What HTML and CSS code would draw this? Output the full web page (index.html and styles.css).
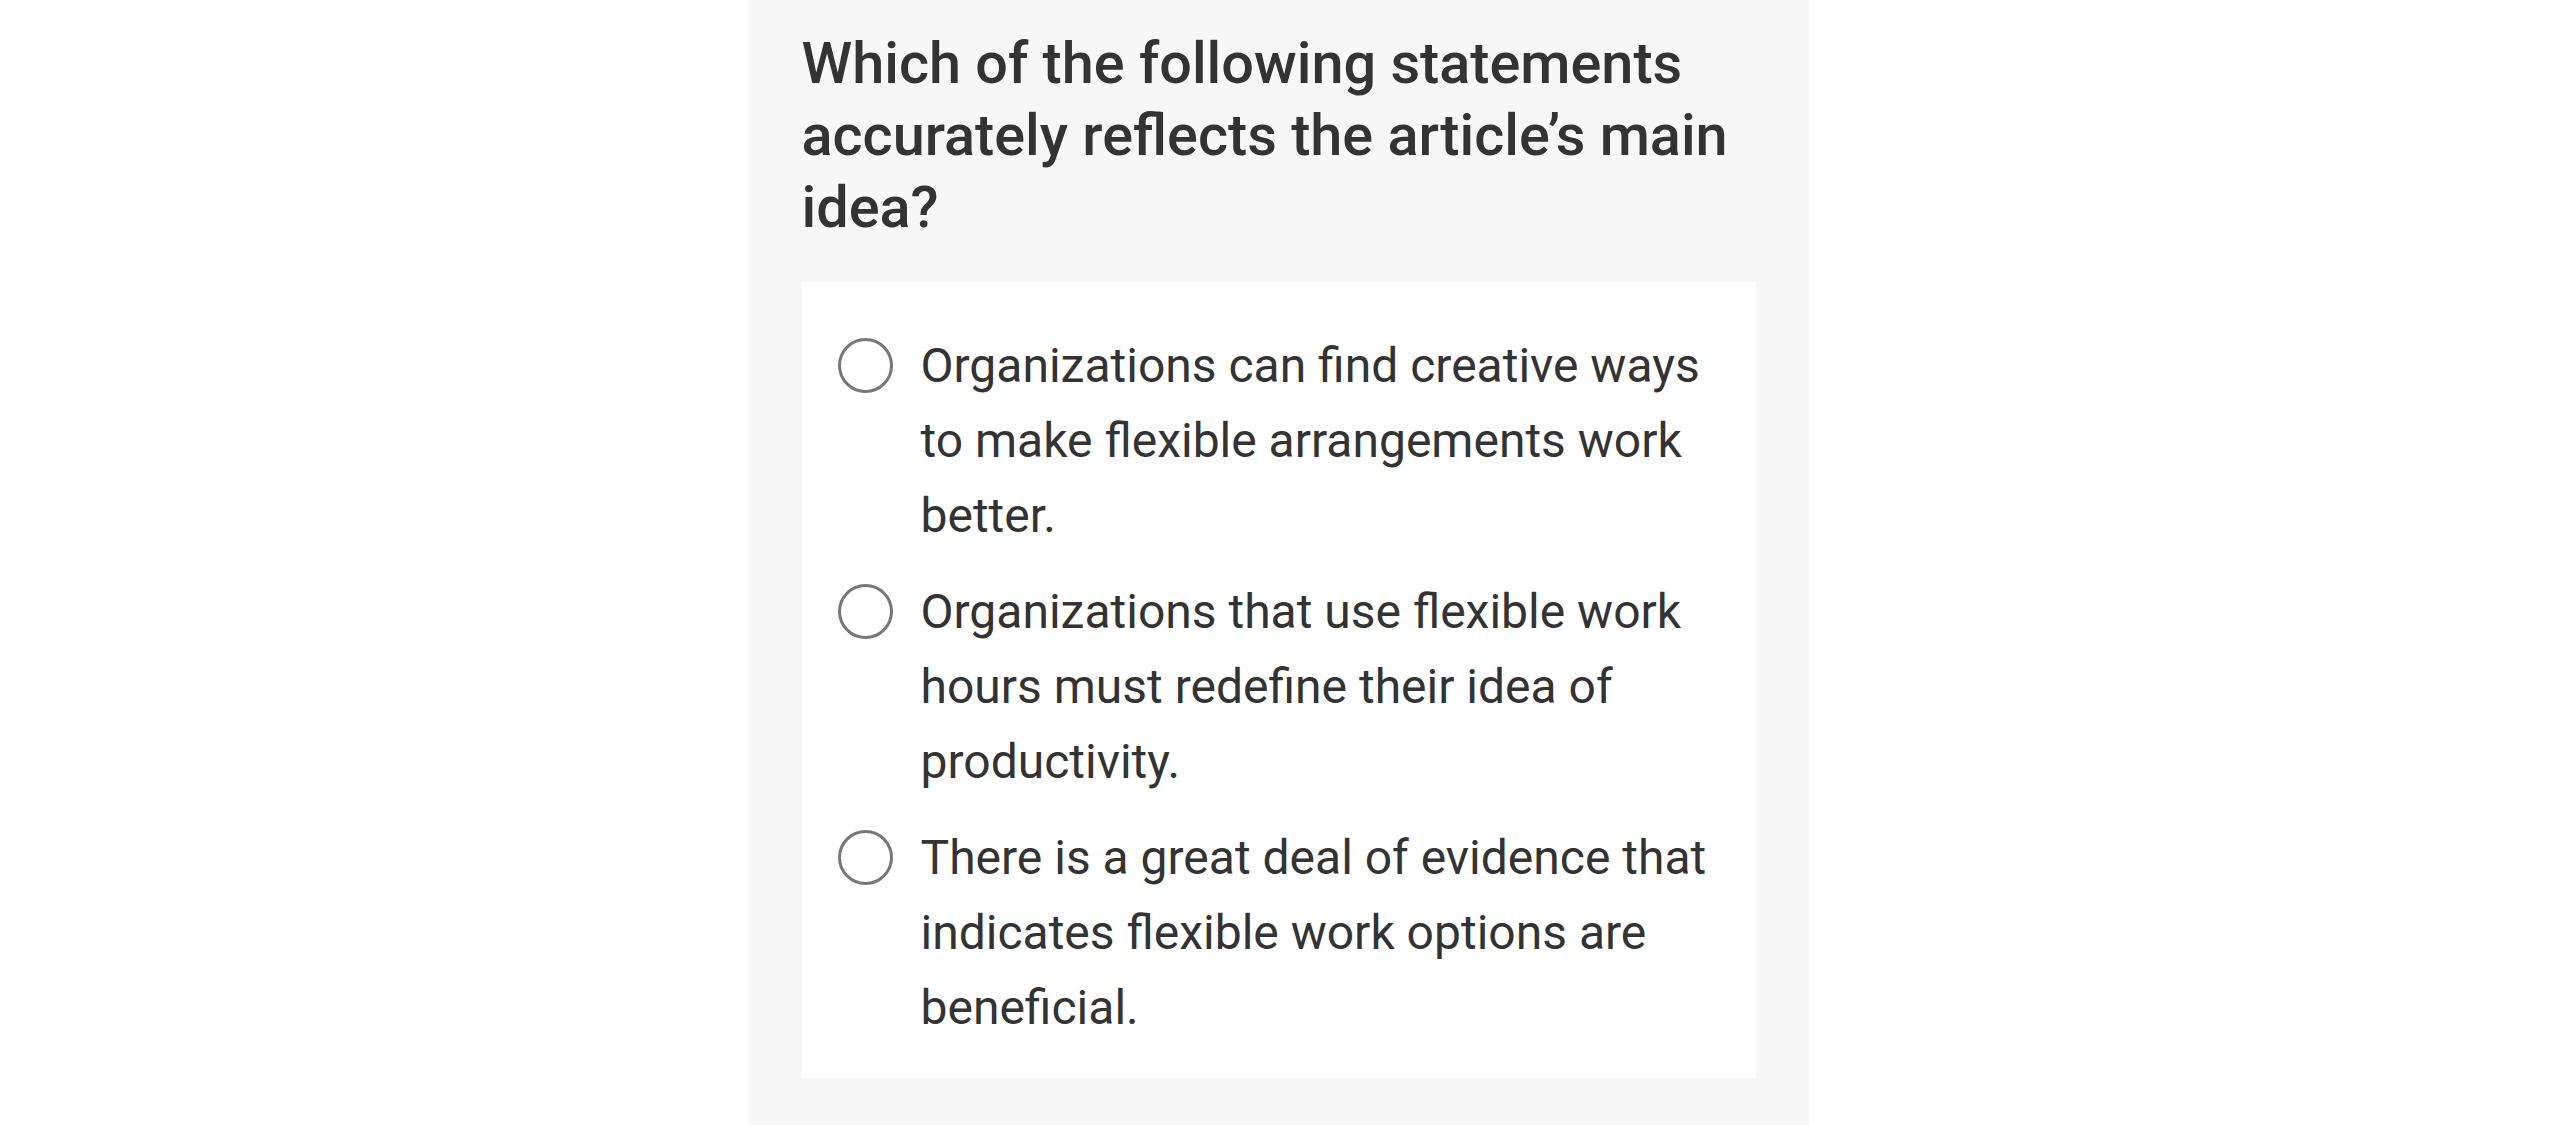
FILE: index.html
```html
<!DOCTYPE html>
<html lang="en">
<head>
<meta charset="utf-8">
<title>Question</title>
<link rel="stylesheet" href="styles.css">
</head>
<body>
<main class="panel">
  <h1 class="question">Which of the following statements accurately reflects the article’s main idea?</h1>
  <div class="card">
    <label class="option">
      <span class="radio"></span>
      <span class="text">Organizations can find creative ways to make flexible arrangements work better.</span>
    </label>
    <label class="option">
      <span class="radio"></span>
      <span class="text">Organizations that use flexible work hours must redefine their idea of productivity.</span>
    </label>
    <label class="option">
      <span class="radio"></span>
      <span class="text">There is a great deal of evidence that indicates flexible work options are beneficial.</span>
    </label>
  </div>
</main>
</body>
</html>
```
FILE: styles.css
```css
html, body {
  margin: 0;
  padding: 0;
  background: #ffffff;
}
body {
  font-family: Roboto, "Liberation Sans", Arial, sans-serif;
  color: #333333;
}
.panel {
  box-sizing: border-box;
  width: 1061px;
  min-height: 1125px;
  margin: 0 auto;
  padding: 28px 53px 0 54px;
  background: #f7f7f7;
}
.question {
  margin: 0 0 38px 0;
  font-size: 57.6px;
  line-height: 72px;
  font-weight: 500;
  color: #333333;
}
.card {
  background: #ffffff;
  padding: 46px 36px 33px 36px;
  display: flex;
  flex-direction: column;
  gap: 21px;
}
.option {
  display: flex;
  align-items: flex-start;
  gap: 28px;
  cursor: pointer;
}
.radio {
  flex: 0 0 auto;
  box-sizing: border-box;
  width: 55px;
  height: 55px;
  margin-top: 10px;
  border: 3px solid #777777;
  border-radius: 50%;
  background: #ffffff;
}
.text {
  font-size: 48px;
  line-height: 75px;
  font-weight: 400;
  color: #333333;
}
```
